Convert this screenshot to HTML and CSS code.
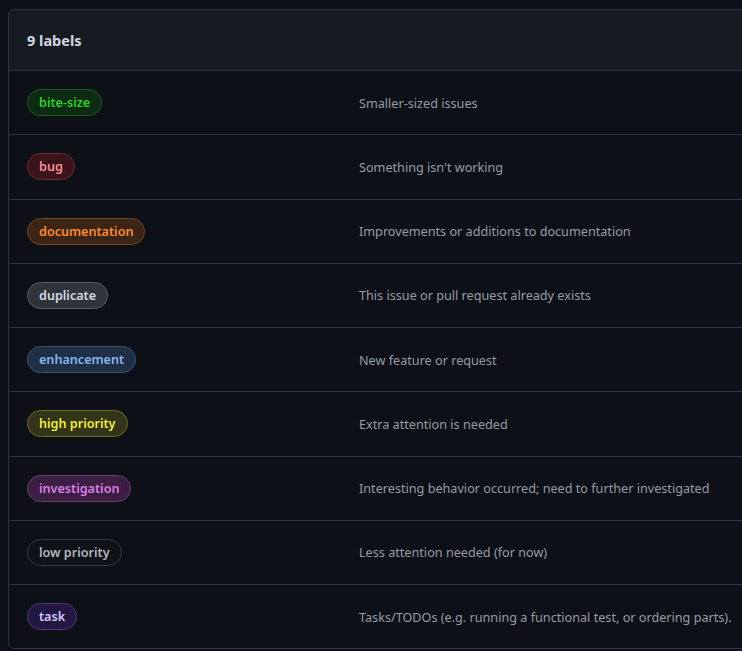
FILE: index.html
```html
<!DOCTYPE html>
<html>
<head>
<meta charset="utf-8">
<link rel="stylesheet" href="styles.css">
</head>
<body>
<div class="box">
  <div class="box-header"><h3 class="count">9 labels</h3></div>
  <div class="row"><div class="cell-label"><span class="label l-bite">bite-size</span></div><div class="desc">Smaller-sized issues</div></div>
  <div class="row"><div class="cell-label"><span class="label l-bug">bug</span></div><div class="desc">Something isn't working</div></div>
  <div class="row"><div class="cell-label"><span class="label l-doc">documentation</span></div><div class="desc">Improvements or additions to documentation</div></div>
  <div class="row"><div class="cell-label"><span class="label l-dup">duplicate</span></div><div class="desc">This issue or pull request already exists</div></div>
  <div class="row"><div class="cell-label"><span class="label l-enh">enhancement</span></div><div class="desc">New feature or request</div></div>
  <div class="row"><div class="cell-label"><span class="label l-high">high priority</span></div><div class="desc">Extra attention is needed</div></div>
  <div class="row"><div class="cell-label"><span class="label l-inv">investigation</span></div><div class="desc">Interesting behavior occurred; need to further investigated</div></div>
  <div class="row"><div class="cell-label"><span class="label l-low">low priority</span></div><div class="desc">Less attention needed (for now)</div></div>
  <div class="row last"><div class="cell-label"><span class="label l-task">task</span></div><div class="desc">Tasks/TODOs (e.g. running a functional test, or ordering parts).</div></div>
</div>
</body>
</html>
```
FILE: styles.css
```css
html, body {
  margin: 0;
  padding: 0;
  background: #0d1117;
  overflow: hidden;
}
body {
  font-family: "Noto Sans", "Liberation Sans", sans-serif;
  color: #c9d1d9;
}
.box {
  margin: 9px 0 0 8px;
  width: 780px;
  border: 1px solid #30363d;
  border-radius: 6px;
  background: #0d1117;
}
.box-header {
  height: 60px;
  display: flex;
  align-items: center;
  padding: 0 18px;
  background: #161b22;
  border-bottom: 1px solid #30363d;
  border-radius: 6px 6px 0 0;
}
.count {
  margin: 0;
  font-size: 14.5px;
  font-weight: 700;
  color: #d1d7e0;
}
.row {
  height: 63.25px;
  display: grid;
  grid-template-columns: 332px 1fr;
  align-items: center;
  padding: 0 18px;
  border-bottom: 1px solid #30363d;
}
.row.last { border-bottom: none; }
.cell-label { display: flex; }
.label {
  display: inline-flex;
  align-items: center;
  height: 25px;
  padding: 0 11px;
  border: 1px solid;
  border-radius: 2em;
  font-size: 12.6px;
  font-weight: 600;
}
.desc {
  font-size: 12.65px;
  color: #969ca4;
}
.l-bite { background: #0d2a12; border-color: #1d5c25; color: #27d127; }
.l-bug { background: #3a141a; border-color: #6e2c33; color: #f68d96; }
.l-doc { background: #3a2516; border-color: #774622; color: #ff8a30; }
.l-dup { background: #30343a; border-color: #575c63; color: #d2d9e1; }
.l-enh { background: #1f2f45; border-color: #3a5676; color: #86b6ee; }
.l-high { background: #33341a; border-color: #6b6c20; color: #f0f030; }
.l-inv { background: #3a1f42; border-color: #6b3d75; color: #df7be9; }
.l-low { background: #0f1318; border-color: #3a3e44; color: #b1b8bf; }
.l-task { background: #231741; border-color: #4b3b80; color: #d3cbff; }
```
